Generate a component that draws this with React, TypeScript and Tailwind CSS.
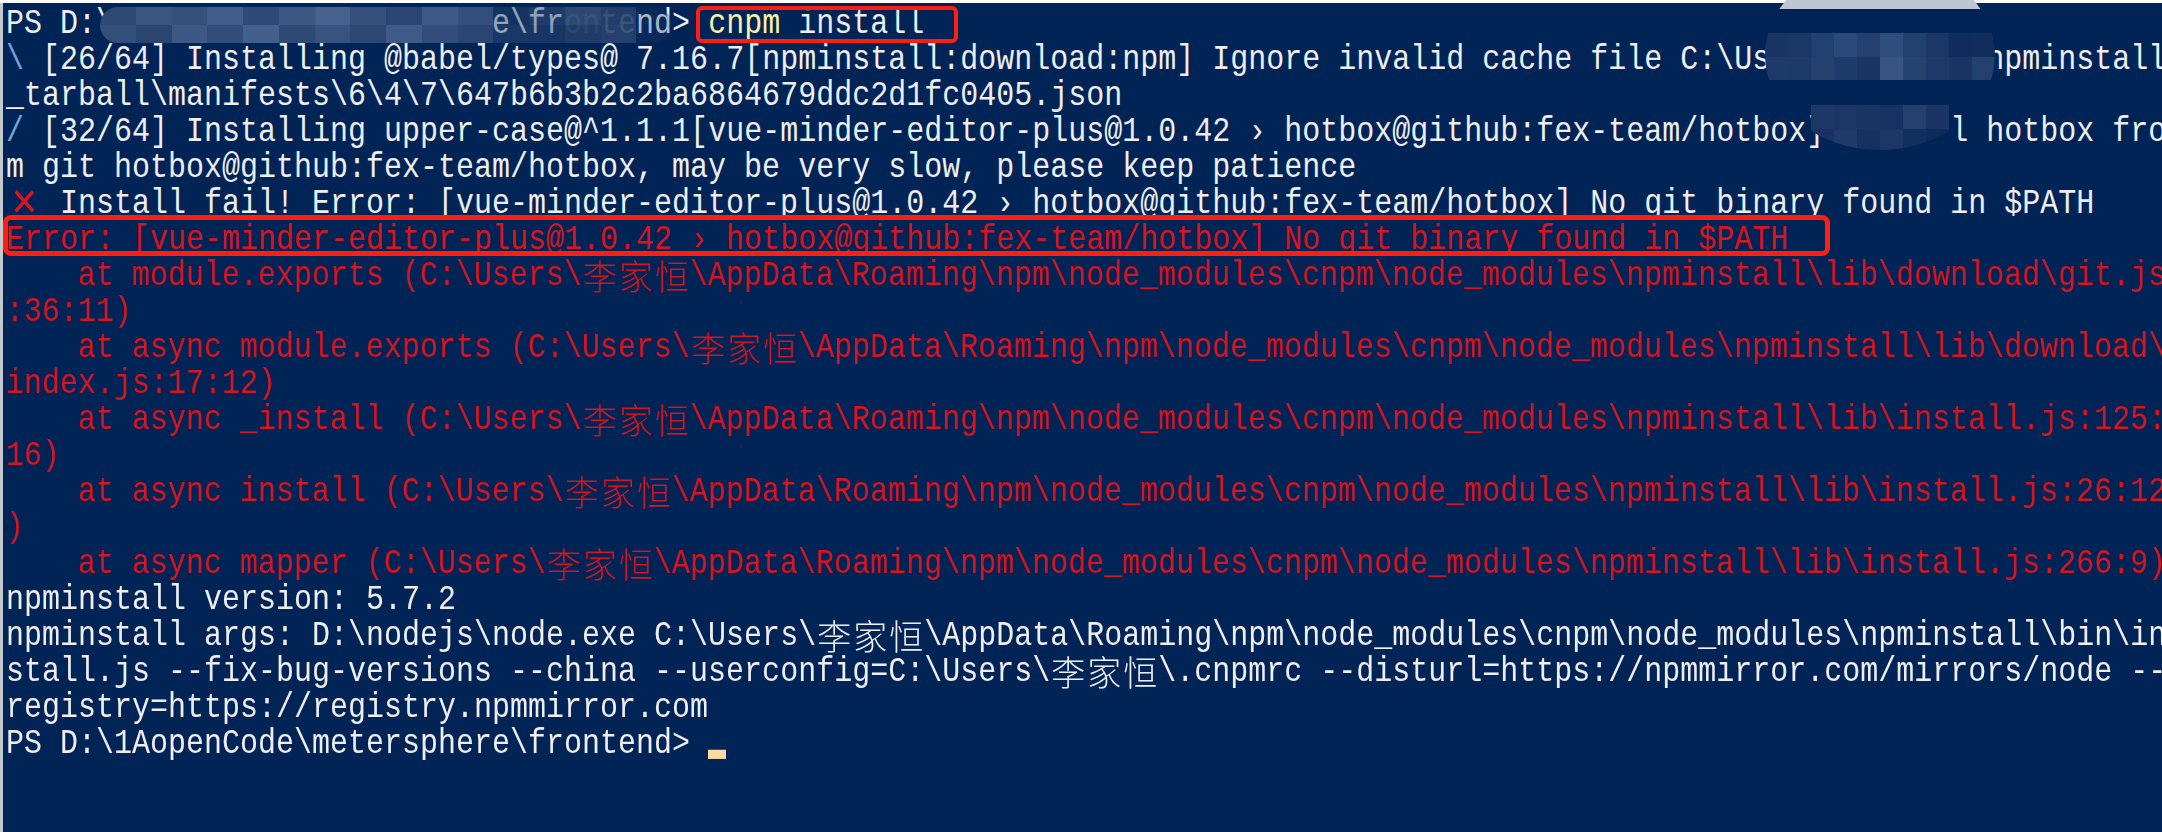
import React from 'react';

type Seg = [string, string];
const W = '#eeedf0';
const R = '#d7141f';
const Y = '#f9f1a5';
const B = '#6ea6dc';

const U = 'C:\\Users\\李家恒\\AppData\\Roaming\\npm\\node_modules\\cnpm\\node_modules\\npminstall\\lib\\';

const lines: Seg[][] = [
  [['PS D:\\1AopenCode\\metersphere\\frontend> ', W], ['cnpm', Y], [' install', W]],
  [['\\', B], [' [26/64] Installing @babel/types@ 7.16.7[npminstall:download:npm] Ignore invalid cache file C:\\Us' + ' '.repeat(12) + 'npminstall', W]],
  [['_tarball\\manifests\\6\\4\\7\\647b6b3b2c2ba6864679ddc2d1fc0405.json', W]],
  [['/', B], [' [32/64] Installing upper-case@^1.1.1[vue-minder-editor-plus@1.0.42 › hotbox@github:fex-team/hotbox]' + ' '.repeat(7) + 'l hotbox fro', W]],
  [['m git hotbox@github:fex-team/hotbox, may be very slow, please keep patience', W]],
  [['×', R], [' Install fail! Error: [vue-minder-editor-plus@1.0.42 › hotbox@github:fex-team/hotbox] No git binary found in $PATH', W]],
  [['Error: [vue-minder-editor-plus@1.0.42 › hotbox@github:fex-team/hotbox] No git binary found in $PATH', R]],
  [['    at module.exports (' + U + 'download\\git.js', R]],
  [[':36:11)', R]],
  [['    at async module.exports (' + U + 'download\\', R]],
  [['index.js:17:12)', R]],
  [['    at async _install (' + U + 'install.js:125:', R]],
  [['16)', R]],
  [['    at async install (' + U + 'install.js:26:12', R]],
  [[')', R]],
  [['    at async mapper (' + U + 'install.js:266:9)', R]],
  [['npminstall version: 5.7.2', W]],
  [['npminstall args: D:\\nodejs\\node.exe C:\\Users\\李家恒\\AppData\\Roaming\\npm\\node_modules\\cnpm\\node_modules\\npminstall\\bin\\in', W]],
  [['stall.js --fix-bug-versions --china --userconfig=C:\\Users\\李家恒\\.cnpmrc --disturl=https://npmmirror.com/mirrors/node --', W]],
  [['registry=https://registry.npmmirror.com', W]],
  [['PS D:\\1AopenCode\\metersphere\\frontend> ', W]],
];

function renderSeg(text: string, color: string, key: number) {
  const parts: React.ReactNode[] = [];
  let buf = '';
  let k = 0;
  const flush = () => {
    if (buf) {
      parts.push(<span key={k++}>{buf}</span>);
      buf = '';
    }
  };
  for (const ch of Array.from(text)) {
    if (/[\u4e00-\u9fff]/.test(ch)) {
      flush();
      parts.push(
        <span
          key={k++}
          className="inline-block w-[36px] h-[36px] align-top text-center font-['Noto_Sans_CJK_SC',sans-serif] font-light text-[34px] leading-[36px] scale-y-[0.9]"
        >
          {ch}
        </span>
      );
    } else if (ch === '×') {
      flush();
      parts.push(
        <span key={k++} className="inline-block w-[36px] h-[36px] align-top text-center text-[44px] leading-[36px]">
          {ch}
        </span>
      );
    } else {
      buf += ch;
    }
  }
  flush();
  return (
    <span key={key} style={{ color }}>
      {parts}
    </span>
  );
}

const pillTop = ['#2d4872', '#3a5580', '#34507b', '#415c88', '#2f4a76', '#3c5784', '#46618e', '#35507c', '#2a4571', '#3e5986', '#334e7a', '#2b4672', '#39547f', '#2f4a75', '#26406b', '#1d3865'];
const pillBot = ['#33507a', '#2a4570', '#3d5884', '#324d79', '#43608c', '#2e4974', '#385380', '#2c4772', '#3f5a87', '#314c78', '#2a4571', '#36517d', '#2d4873', '#223d69', '#2a4470', '#1b3663'];
const pillAlpha = [1, 1, 1, 1, 1, 1, 1, 1, 1, 1, 1, 0.45, 0.5, 0.95, 0.9, 0.3];

const rowA = ['#1a3563', '#1b3665', '#22406f', '#2b4a7c', '#253f6e', '#2e4c7c', '#22406e', '#1b3666', '#0f2c5c', '#102d5c'];
const rowB = ['#1e3a6a', '#1d3968', '#253f6f', '#1e3a6a', '#1a3564', '#3a5482', '#26426f', '#1d3869', '#1a3564', '#21406e'];
const rowC = ['transparent', 'transparent', '#1d3868', '#1b3666', '#193564', '#163163', '#23406f', '#1a3565', 'transparent', 'transparent'];
const rowD = ['transparent', 'transparent', '#183363', '#1f3a6a', '#153062', '#1c3767', '#12305f', '#0e2b5b', 'transparent', 'transparent'];

function BlockRow({ colors, h, alpha }: { colors: string[]; h: string; alpha?: number[] }) {
  return (
    <div className={`flex shrink-0 ${h}`}>
      {colors.map((c, i) => (
        <div key={i} className="flex-1" style={{ backgroundColor: c, opacity: alpha ? alpha[i] : 1 }} />
      ))}
    </div>
  );
}

export default function App() {
  return (
    <div className="relative w-[2162px] h-[832px] overflow-hidden bg-[#012456] flex flex-col">
      <div className="h-[3px] w-full bg-white shrink-0" />
      <div className="flex flex-1">
        <div className="w-[3px] bg-[#c4c8cf] shrink-0" />
        <div className="flex-1 pt-[3px] pl-[3px] font-['Liberation_Mono','Noto_Sans_CJK_SC',monospace] text-[30px] leading-[36px] whitespace-pre">
          {lines.map((segs, i) => (
            <div key={i} className="h-[36px] scale-y-[1.15]">
              {segs.map((s, j) => renderSeg(s[0], s[1], j))}
              {i === lines.length - 1 && (
                <span className="inline-block w-[18px] h-[31px] align-top border-b-[8px] border-[#ffd9a3]" />
              )}
            </div>
          ))}
        </div>
      </div>

      {/* blurred path on the first line */}
      <div className="absolute left-[100px] top-[7px] w-[572px] h-[36px] rounded-[18px] overflow-hidden flex flex-col">
        <BlockRow colors={pillTop} h="h-[18px]" alpha={pillAlpha} />
        <BlockRow colors={pillBot} h="h-[18px]" alpha={pillAlpha} />
      </div>

      {/* blurred user name at the top right */}
      <div className="absolute left-[1765px] top-[-40px] w-[230px] h-[190px] rounded-[50%] overflow-hidden flex flex-col">
        <div className="h-[49px] bg-[#bfc6d3] shrink-0" />
        <div className="h-[24px] shrink-0 bg-[#012456]" />
        <BlockRow colors={rowA} h="h-[24px]" />
        <BlockRow colors={rowB} h="h-[23px]" />
        <div className="h-[25px] shrink-0" />
        <BlockRow colors={rowC} h="h-[24px]" />
        <BlockRow colors={rowD} h="h-[21px]" />
      </div>

      {/* red annotation boxes */}
      <div className="absolute left-[696px] top-[6px] w-[262px] h-[37px] border-[4px] border-[#ff1e10] rounded-[6px]" />
      <div className="absolute left-[3px] top-[215px] w-[1827px] h-[41px] border-[5px] border-[#ff1e10] rounded-[8px]" />
    </div>
  );
}
